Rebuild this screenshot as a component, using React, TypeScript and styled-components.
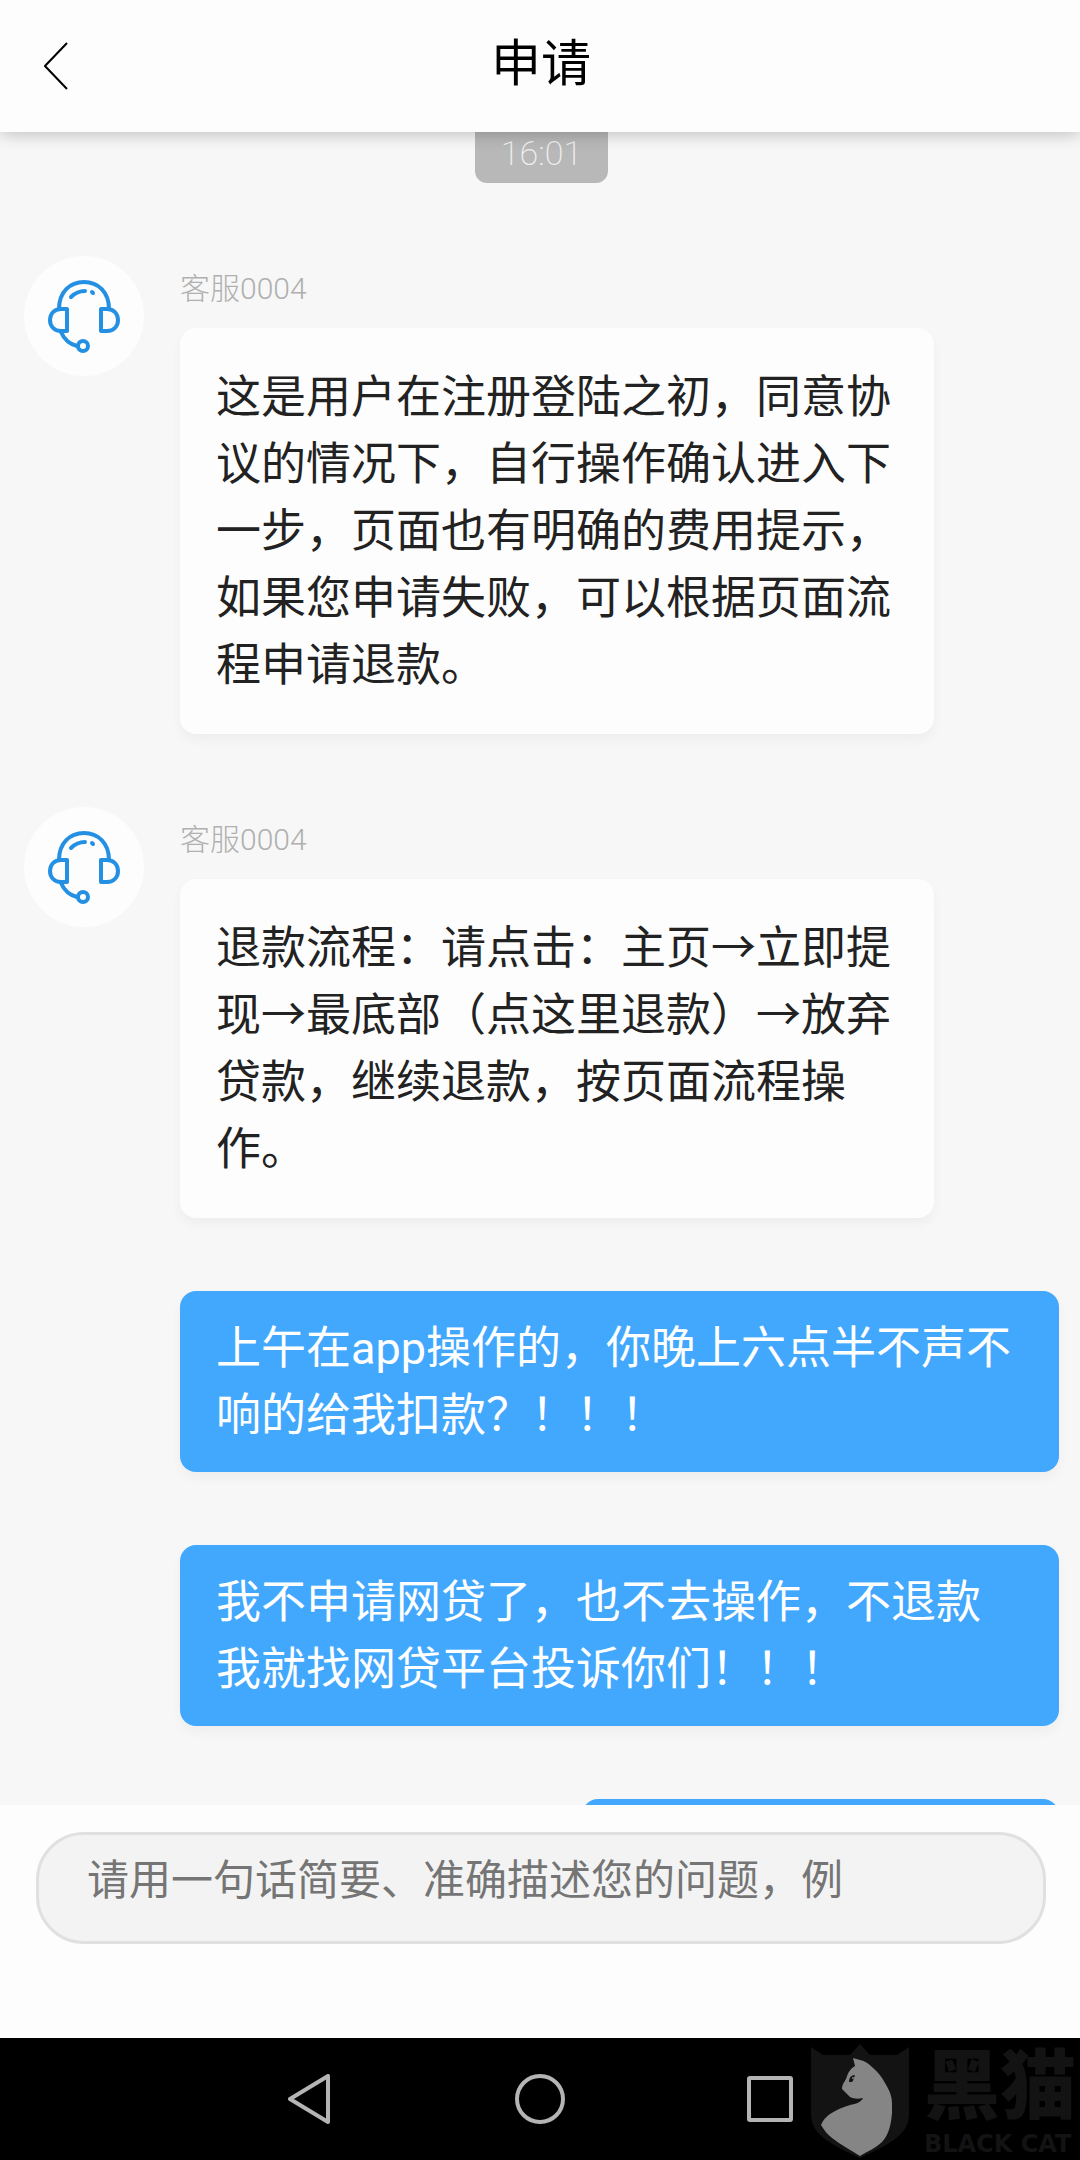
import React from "react";
import styled, { createGlobalStyle } from "styled-components";

const GlobalStyle = createGlobalStyle`
  * { box-sizing: border-box; }
  body {
    margin: 0;
    background: #f7f7f7;
    font-family: Roboto, "Noto Sans CJK SC", sans-serif;
  }
  button {
    display: flex;
    align-items: center;
    justify-content: center;
    padding: 0;
    border: 0;
    background: none;
    cursor: pointer;
  }
  svg { display: block; }
`;

const Screen = styled.div`
  display: flex;
  flex-direction: column;
  height: 100vh;
  overflow: hidden;
`;

const Header = styled.header`
  display: grid;
  grid-template-columns: 112px 1fr 110px;
  align-items: center;
  flex: none;
  height: 132px;
  background: #fdfdfd;
  box-shadow: 0 2px 16px rgba(0, 0, 0, 0.24);
  z-index: 1;
`;

const Title = styled.h1`
  margin: 0;
  padding-bottom: 4px;
  color: #000;
  font-size: 50px;
  font-weight: 400;
  line-height: 72px;
  text-align: center;
`;

const Chat = styled.main`
  display: flex;
  flex: 1;
  flex-direction: column;
  gap: 73px;
  min-height: 0;
  padding: 0 21px 0 24px;
  overflow: hidden;
`;

const TimeStamp = styled.time`
  align-self: center;
  flex: none;
  padding: 0 26px 9px;
  border-radius: 0 0 12px 12px;
  background: #b8b8b8;
  color: #efefef;
  font-size: 34px;
  font-weight: 200;
  line-height: 42px;
`;

const AgentRow = styled.article`
  display: flex;
  flex: none;
  align-items: flex-start;
  gap: 36px;
`;

const Avatar = styled.div`
  display: grid;
  flex: none;
  place-items: center;
  width: 120px;
  height: 120px;
  border-radius: 50%;
  background: #fdfdfd;
`;

const AgentName = styled.div`
  padding: 13px 0 19px;
  color: #b0b0b0;
  font-size: 30px;
  font-weight: 300;
  line-height: 40px;
`;

const Bubble = styled.p<{ $own?: boolean }>`
  margin: 0;
  padding: ${(p) => (p.$own ? "24px 36px 23px" : "36px 36px 35px")};
  border-radius: 16px;
  background: ${(p) => (p.$own ? "#42a8fe" : "#fdfdfd")};
  box-shadow: 0 6px 12px rgba(0, 0, 0, 0.04);
  color: ${(p) => (p.$own ? "#fff" : "#222")};
  font-size: 45px;
  line-height: 67px;
  text-spacing-trim: space-all;
`;

const AgentBody = styled.div`
  max-width: 754px;
`;

const OwnRow = styled.article`
  display: flex;
  flex: none;
  justify-content: flex-end;
  padding-left: 156px;
`;

const NextBubble = styled(Bubble)`
  width: 477px;
  height: 114px;
`;

const Composer = styled.form`
  flex: none;
  padding: 27px 34px 94px 36px;
  background: #fdfdfd;
`;

const Question = styled.textarea`
  display: block;
  width: 100%;
  height: 112px;
  padding: 14px 120px 10px 48px;
  border: 3px solid #e0e0e0;
  border-radius: 48px;
  outline: 0;
  background: #f3f3f3;
  color: #222;
  font: 400 42px/64px Roboto, "Noto Sans CJK SC", sans-serif;
  resize: none;
  overflow: hidden;
  white-space: nowrap;
  &::placeholder { color: #757575; }
`;

const NavBar = styled.nav`
  position: relative;
  display: grid;
  grid-template-columns: repeat(3, 230px);
  flex: none;
  justify-content: center;
  align-items: center;
  height: 122px;
  background: #000;
`;

const Watermark = styled.div`
  position: absolute;
  right: 2px;
  bottom: 0;
  display: flex;
  align-items: flex-start;
  gap: 15px;
  height: 116px;
  color: #131313;
`;

const Brand = styled.div`
  display: flex;
  flex-direction: column;
  width: 154px;
  font-weight: 900;
`;

const BrandName = styled.span`
  font-size: 76px;
  line-height: 87px;
`;

const BrandLatin = styled.span`
  font: 700 24px/26px "DejaVu Sans", sans-serif;
  white-space: nowrap;
`;

function Headset() {
  return (
    <svg width="74" height="74" viewBox="-1 -1 74 74" fill="none" stroke="#2490e4" strokeWidth="4" strokeLinecap="round" strokeLinejoin="round" aria-hidden="true">
      <path d="M11 29C11 12 22 2 36 2s25 10 25 27" />
      <path d="M19 29v22h-6C6 51 2 46 2 40s4-11 11-11z" />
      <path d="M53 29v22h6c7 0 11-5 11-11s-4-11-11-11z" />
      <path d="M13 52c3 7 8 12 16 14" />
      <circle cx="35" cy="66" r="5" />
      <path d="M23 17c4-4 8-6 14-6M44 12l1 1" />
    </svg>
  );
}

function CatShield() {
  return (
    <svg width="98" height="114" viewBox="0 0 98 114" aria-hidden="true">
      <path d="M0 3l12 8h27L49 0l10 11h27l12-8v68c0 21-24 31-49 43C24 102 0 92 0 71z" fill="#131313" />
      <path d="M42 14l7 2c5 1 9 4 12 7 6 5 10 10 13 16 5 8 7 14 7 20v10c-1 13-4 23-10 29-6 6-14 9-22 14-9-6-19-11-28-18-5-4-8-8-11-13 2-5 5-8 9-11 6-4 13-7 20-9 6-1 11-3 13-7-5 1-9 1-13-1l-8-8c0-6 4-8 5-13 2-5 4-8 8-10z" fill="#858585" />
      <path d="M38 38c0-4 2-7 6-7-1 2-1 5-3 7z" fill="#131313" />
      <circle cx="42" cy="34" r="1" fill="#858585" />
    </svg>
  );
}

function AgentMessage({ children }: { children: React.ReactNode }) {
  return (
    <AgentRow>
      <Avatar><Headset /></Avatar>
      <AgentBody>
        <AgentName>客服0004</AgentName>
        <Bubble>{children}</Bubble>
      </AgentBody>
    </AgentRow>
  );
}

function OwnMessage({ children }: { children: React.ReactNode }) {
  return (
    <OwnRow>
      <Bubble $own>{children}</Bubble>
    </OwnRow>
  );
}

export default function App() {
  return (
    <Screen>
      <GlobalStyle />
      <Header>
        <button type="button" aria-label="返回">
          <svg width="24" height="48" viewBox="0 0 24 48" fill="none" stroke="#000" strokeWidth="2">
            <path d="M23 1L1 24l22 23" />
          </svg>
        </button>
        <Title>申请</Title>
      </Header>
      <Chat>
        <TimeStamp>16:01</TimeStamp>
        <AgentMessage>
          这是用户在注册登陆之初，同意协议的情况下，自行操作确认进入下一步，页面也有明确的费用提示，如果您申请失败，可以根据页面流程申请退款。
        </AgentMessage>
        <AgentMessage>
          退款流程：请点击：主页→立即提现→最底部（点这里退款）→放弃贷款，继续退款，按页面流程操作。
        </AgentMessage>
        <OwnMessage>上午在app操作的，你晚上六点半不声不响的给我扣款？！！！</OwnMessage>
        <OwnMessage>我不申请网贷了，也不去操作，不退款我就找网贷平台投诉你们！！！</OwnMessage>
        <OwnRow>
          <NextBubble $own />
        </OwnRow>
      </Chat>
      <Composer>
        <Question rows={1} aria-label="问题描述" placeholder="请用一句话简要、准确描述您的问题，例" />
      </Composer>
      <NavBar>
        <button type="button" aria-label="后退">
          <svg width="50" height="50" viewBox="0 0 50 50" fill="none" stroke="#b4b4b4" strokeWidth="4" strokeLinejoin="round">
            <path d="M43 2v46L5 25z" />
          </svg>
        </button>
        <button type="button" aria-label="主屏幕">
          <svg width="50" height="50" viewBox="0 0 50 50" fill="none" stroke="#b4b4b4" strokeWidth="4">
            <circle cx="25" cy="25" r="23" />
          </svg>
        </button>
        <button type="button" aria-label="最近任务">
          <svg width="50" height="50" viewBox="0 0 50 50" fill="none" stroke="#b4b4b4" strokeWidth="4">
            <rect x="4" y="4" width="42" height="42" rx="1" />
          </svg>
        </button>
        <Watermark>
          <CatShield />
          <Brand>
            <BrandName>黑猫</BrandName>
            <BrandLatin>BLACK CAT</BrandLatin>
          </Brand>
        </Watermark>
      </NavBar>
    </Screen>
  );
}
